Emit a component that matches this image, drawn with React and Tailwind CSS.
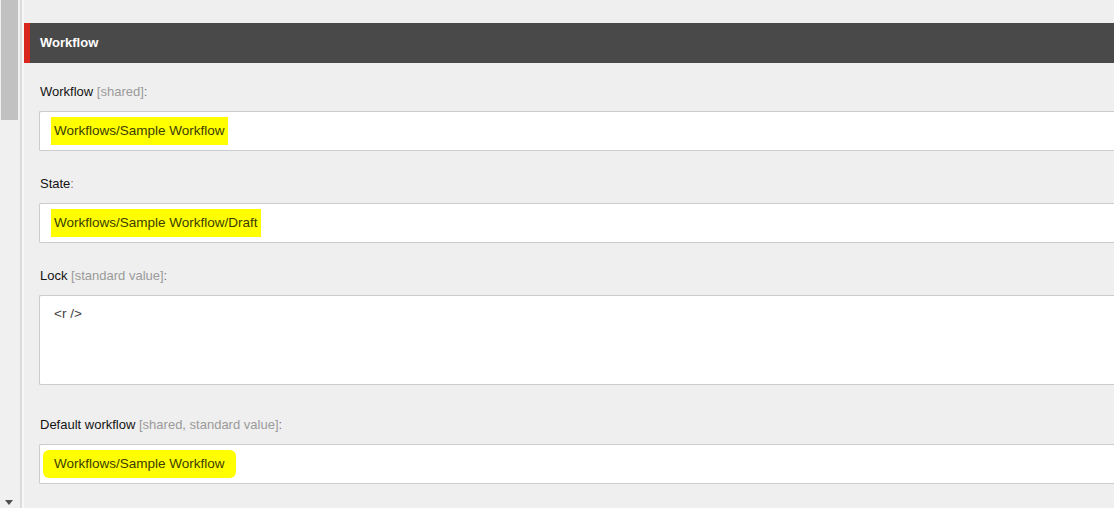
import React from 'react'

function Label({ name, status }) {
  return (
    <div className="text-[13px] leading-[16px] text-[#131313] mb-[11px] ml-[1px]">
      {name}
      {status && <span className="text-[#9a9a9a]"> [{status}]</span>}
      <span className="text-[#777]">:</span>
    </div>
  )
}

function Hl({ children, marker }) {
  if (marker) {
    return (
      <span className="bg-[#ffff00] text-[#3c3c00] pl-[11px] pr-[11px] py-[4px] -ml-[11px] rounded-[6px]">
        {children}
      </span>
    )
  }
  return <span className="bg-[#ffff00] text-[#3c3c00] px-[3px] py-[4px] -ml-[3px]">{children}</span>
}

function Field({ name, status, children, tall }) {
  return (
    <div className="mb-[25px]">
      <Label name={name} status={status} />
      <div
        className={
          'bg-white border border-[#cccccc] rounded-l-[2px] border-r-0 pl-[14px] text-[13.5px] ' +
          (tall ? 'h-[90px] pt-[9px] leading-[18px]' : 'h-[40px] flex items-center')
        }
      >
        {children}
      </div>
    </div>
  )
}

export default function App() {
  return (
    <div className="w-[1114px] h-[508px] overflow-hidden flex bg-[#efefef]" style={{ fontFamily: '"Liberation Sans", Arial, sans-serif' }}>
      {/* left scrollbar */}
      <div className="w-[20px] h-full bg-[#f0f0f0] relative shrink-0">
        <div className="ml-[1px] w-[17px] h-[120px] bg-[#c1c1c1]" />
        <div className="absolute left-[5px] bottom-[3px] w-0 h-0 border-l-[4px] border-r-[4px] border-t-[5px] border-l-transparent border-r-transparent border-t-[#505050]" />
      </div>
      <div className="w-[2px] h-full bg-[#dcdcdc] shrink-0" />
      <div className="w-[2px] h-full bg-[#f7f7f7] shrink-0" />

      <div className="flex-1 pt-[23px]">
        <div className="h-[40px] bg-[#494949] border-l-[6px] border-[#d9261c] flex items-center pl-[10px]">
          <span className="text-white font-bold text-[13px]">Workflow</span>
        </div>

        <div className="pl-[15px] pt-[21px]">
          <Field name="Workflow" status="shared">
            <Hl>Workflows/Sample Workflow</Hl>
          </Field>
          <Field name="State">
            <Hl>Workflows/Sample Workflow/Draft</Hl>
          </Field>
          <div className="mb-[32px]">
            <Field name="Lock" status="standard value" tall>
              <span className="text-[#444]">&lt;r /&gt;</span>
            </Field>
          </div>
          <Field name="Default workflow" status="shared, standard value">
            <Hl marker>Workflows/Sample Workflow</Hl>
          </Field>
        </div>
      </div>
    </div>
  )
}
